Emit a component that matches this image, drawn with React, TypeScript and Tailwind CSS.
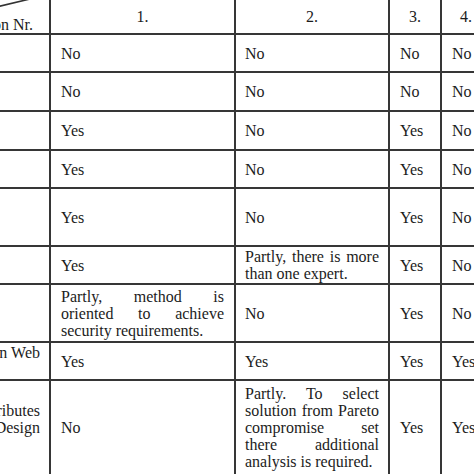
const rows: { label?: string[]; c1: string; c2: string; c3: string; c4: string }[] = [
  { c1: 'No', c2: 'No', c3: 'No', c4: 'No' },
  { c1: 'No', c2: 'No', c3: 'No', c4: 'No' },
  { c1: 'Yes', c2: 'No', c3: 'Yes', c4: 'No' },
  { c1: 'Yes', c2: 'No', c3: 'Yes', c4: 'No' },
  { c1: 'Yes', c2: 'No', c3: 'Yes', c4: 'No' },
  { c1: 'Yes', c2: 'Partly, there is more than one expert.', c3: 'Yes', c4: 'No' },
  { c1: 'Partly, method is oriented to achieve security requirements.', c2: 'No', c3: 'Yes', c4: 'No' },
  { label: ['Applicable in Web', 'services'], c1: 'Yes', c2: 'Yes', c3: 'Yes', c4: 'Yes' },
  {
    label: ['Quality attributes', 'of different Design', 'solutions'],
    c1: 'No',
    c2: 'Partly. To select solution from Pareto compromise set there additional analysis is required.',
    c3: 'Yes',
    c4: 'Yes',
  },
];

function Label({ lines }: { lines?: string[] }) {
  if (!lines) return null;
  return (
    <div className="w-full">
      {lines.map((l, i) => (
        <div key={i} className={i === lines.length - 1 ? 'text-left whitespace-nowrap' : 'text-right whitespace-nowrap'}>
          {l}
        </div>
      ))}
    </div>
  );
}

export default function App() {
  return (
    <div
      className="w-[474px] h-[474px] overflow-hidden bg-white text-[16px] leading-[17px] text-[#1c1c1c]"
      style={{ fontFamily: '"Liberation Serif", "Times New Roman", serif' }}
    >
      <div className="ml-[-152px] mt-[-2px] w-max p-[2px] gap-[2px] bg-[#363636] grid grid-cols-[199px_183px_152px_50px_48px] grid-rows-[33px_36px_37px_37px_36px_56px_36px_56px_36px_100px]">
        {/* header */}
        <div className="bg-white relative flex items-end justify-end pr-[16px]">
          <svg className="absolute left-0 top-0" width="199" height="33" viewBox="0 0 199 33">
            <line x1="100" y1="18" x2="182" y2="-1.5" stroke="#333" strokeWidth="1.6" />
          </svg>
          <span className="whitespace-nowrap">Solution Nr.</span>
        </div>
        <div className="bg-white flex items-center justify-center">1.</div>
        <div className="bg-white flex items-center justify-center">2.</div>
        <div className="bg-white flex items-center justify-center">3.</div>
        <div className="bg-white flex items-center justify-center">4.</div>

        {rows.map((r, i) => {
          const last = i === rows.length - 1;
          const pb = last ? 'pb-[8px]' : 'pb-0';
          return [
            <div key={`l${i}`} className={'bg-white flex items-center pr-[9px] pl-[10px] ' + pb}>
              <Label lines={r.label} />
            </div>,
            <div key={`a${i}`} className={'bg-white flex items-center px-[10px] ' + pb}>
              <p className="text-justify w-full">{r.c1}</p>
            </div>,
            <div key={`b${i}`} className={'bg-white flex items-center px-[9px] ' + pb}>
              <p className="text-justify w-full">{r.c2}</p>
            </div>,
            <div key={`c${i}`} className={'bg-white flex items-center px-[10px] ' + pb}>
              {r.c3}
            </div>,
            <div key={`d${i}`} className={'bg-white flex items-center px-[10px] ' + pb}>
              {r.c4}
            </div>,
          ];
        })}
      </div>
    </div>
  );
}
